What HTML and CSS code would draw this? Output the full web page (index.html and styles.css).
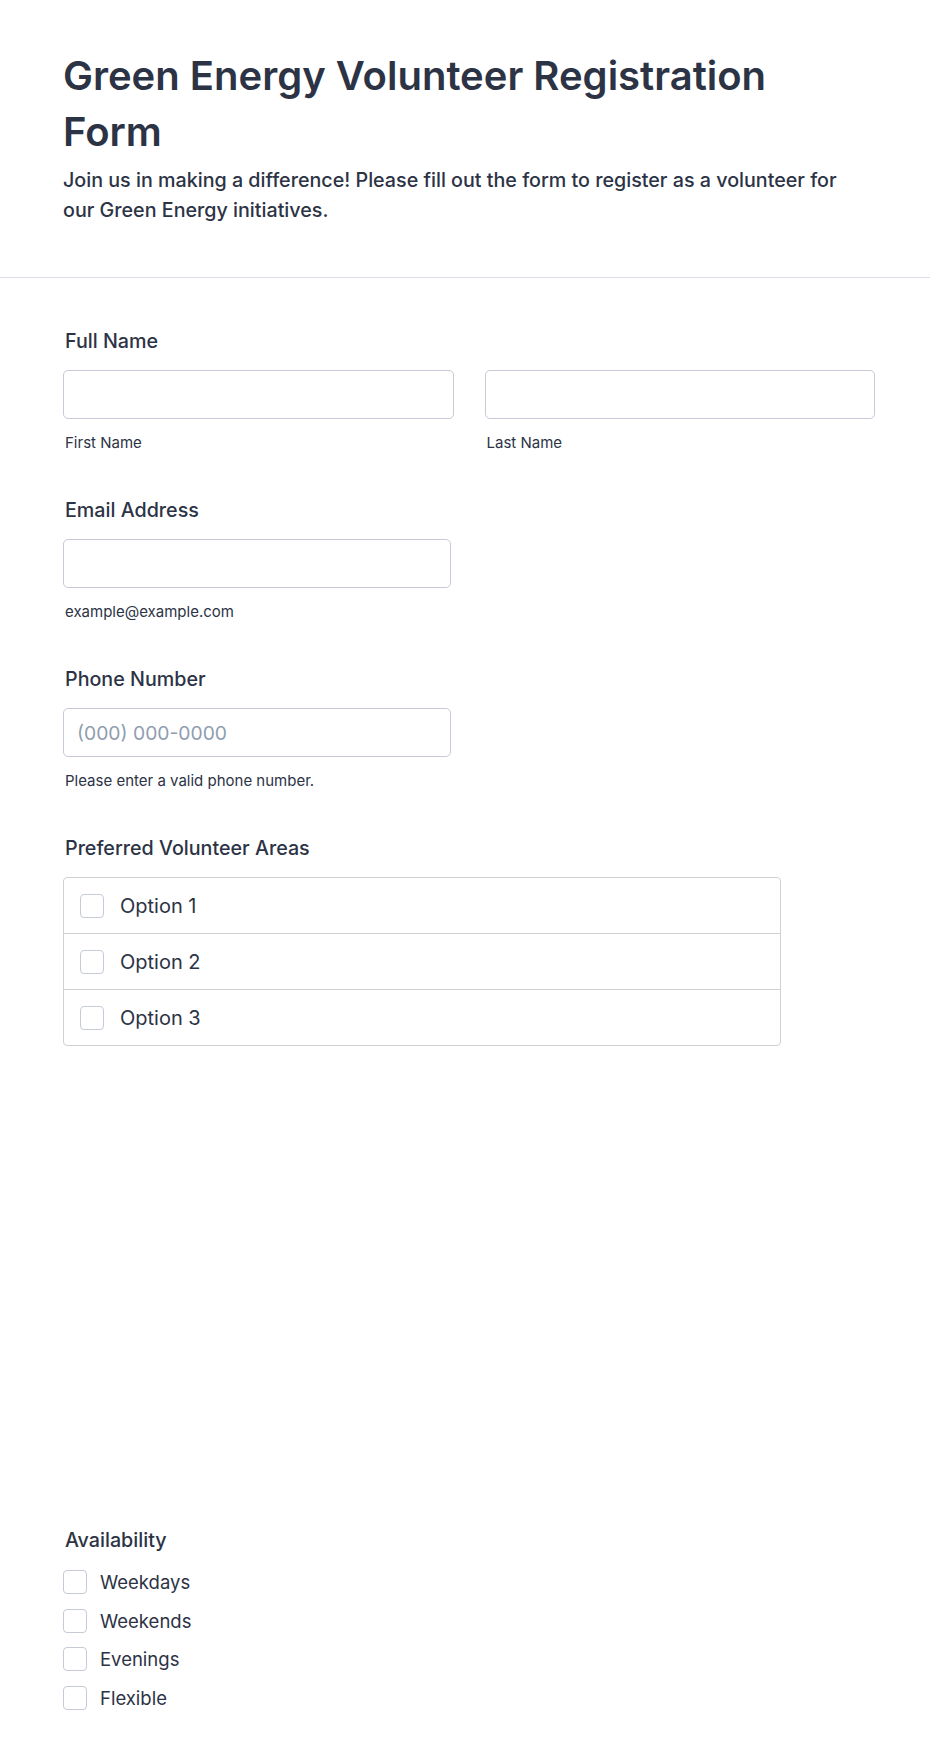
FILE: index.html
```html
<!DOCTYPE html>
<html lang="en">
<head>
    <meta charset="UTF-8">
    <meta name="viewport" content="width=device-width, initial-scale=1.0">
    <title>Green Energy Volunteer Registration Form</title>
    <link rel="stylesheet" href="styles.css">
</head>
<body>
    <div class="form-header">
        <h1>Green Energy Volunteer Registration Form</h1>
        <p class="form-subtitle">Join us in making a difference! Please fill out the form to register as a volunteer for our Green Energy initiatives.</p>
    </div>

    <form class="form-body">
        <div class="field">
            <label class="field-label">Full Name</label>
            <div class="name-row">
                <div class="name-part">
                    <input type="text" class="text-input" id="firstName">
                    <span class="sublabel">First Name</span>
                </div>
                <div class="name-part">
                    <input type="text" class="text-input" id="lastName">
                    <span class="sublabel">Last Name</span>
                </div>
            </div>
        </div>

        <div class="field">
            <label class="field-label" for="email">Email Address</label>
            <input type="email" class="text-input short" id="email">
            <span class="sublabel">example@example.com</span>
        </div>

        <div class="field">
            <label class="field-label" for="phone">Phone Number</label>
            <input type="tel" class="text-input short" id="phone" placeholder="(000) 000-0000">
            <span class="sublabel">Please enter a valid phone number.</span>
        </div>

        <div class="field">
            <label class="field-label">Preferred Volunteer Areas</label>
            <div class="option-list">
                <label class="option-row"><input type="checkbox" class="check"><span>Option 1</span></label>
                <label class="option-row"><input type="checkbox" class="check"><span>Option 2</span></label>
                <label class="option-row"><input type="checkbox" class="check"><span>Option 3</span></label>
            </div>
        </div>

        <div class="field availability">
            <label class="field-label">Availability</label>
            <div class="check-list">
                <label class="check-item"><input type="checkbox" class="check"><span>Weekdays</span></label>
                <label class="check-item"><input type="checkbox" class="check"><span>Weekends</span></label>
                <label class="check-item"><input type="checkbox" class="check"><span>Evenings</span></label>
                <label class="check-item"><input type="checkbox" class="check"><span>Flexible</span></label>
            </div>
        </div>
    </form>
</body>
</html>
```

FILE: styles.css
```css
body {
    margin: 0;
    background-color: #fff;
    color: #2c3345;
    font-family: Inter, "Noto Sans", sans-serif;
}

.form-header {
    padding: 48px 63px 52px;
    border-bottom: 1px solid #dcdde6;
}

.form-header h1 {
    max-width: 790px;
    margin: 0;
    font-size: 40px;
    line-height: 56px;
    font-weight: 600;
}

.form-subtitle {
    max-width: 790px;
    margin: 5px 0 0;
    font-size: 19.7px;
    line-height: 30px;
    font-weight: 500;
}

.form-body {
    display: flex;
    flex-direction: column;
    gap: 44px;
    width: 812px;
    padding: 50px 63px 60px;
}

.field {
    display: flex;
    flex-direction: column;
}

.field-label {
    padding-left: 2px;
    font-size: 19.7px;
    line-height: 26px;
    font-weight: 500;
    margin-bottom: 16px;
}

.name-row {
    display: flex;
    gap: 31px;
}

.name-part {
    flex: 1;
    display: flex;
    flex-direction: column;
}

.text-input {
    box-sizing: border-box;
    height: 49px;
    padding: 0 13px;
    border: 1px solid #c5cad6;
    border-radius: 5px;
    font-family: inherit;
    font-size: 19.3px;
    color: #2c3345;
    background: #fff;
}

.text-input.short {
    width: 388px;
}

.text-input::placeholder {
    color: #8f9db0;
}

.sublabel {
    margin-top: 14px;
    padding-left: 2px;
    font-size: 15px;
    line-height: 20px;
}

.option-list {
    width: 718px;
    box-sizing: border-box;
    border: 1px solid #cfd1d6;
    border-radius: 4px;
}

.option-row {
    display: flex;
    align-items: center;
    gap: 16px;
    height: 55px;
    padding: 0 16px;
    font-size: 20px;
    border-top: 1px solid #cfd1d6;
}

.option-row:first-child {
    border-top: none;
}

.check {
    appearance: none;
    -webkit-appearance: none;
    box-sizing: border-box;
    width: 24px;
    height: 24px;
    margin: 0;
    border: 1px solid #c5cad6;
    border-radius: 4px;
    background: #fff;
    flex-shrink: 0;
}

.availability {
    margin-top: 437px;
}

.availability .field-label {
    margin-bottom: 17px;
}

.check-list {
    display: flex;
    flex-direction: column;
    gap: 14.5px;
}

.check-item {
    display: flex;
    align-items: center;
    gap: 13px;
    height: 24px;
    font-size: 18.5px;
}
```
